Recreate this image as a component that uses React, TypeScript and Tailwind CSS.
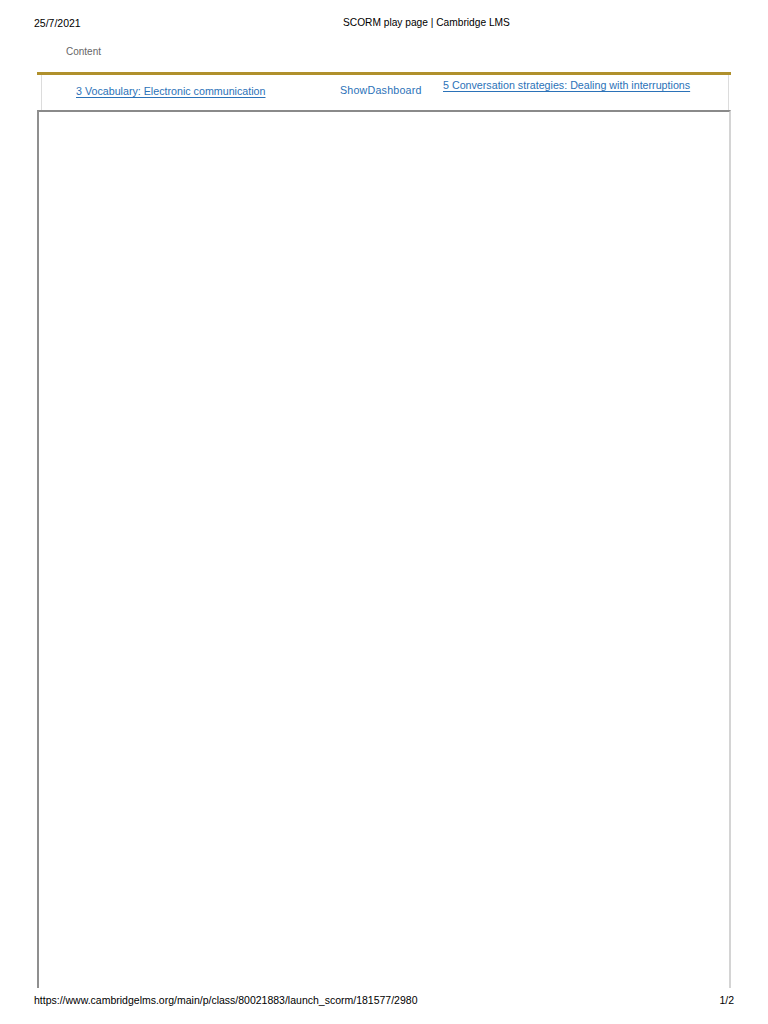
import React from "react";

export default function App() {
  return (
    <div
      className="w-[768px] h-[1024px] bg-white relative overflow-hidden text-[#222]"
      style={{ fontFamily: '"Liberation Sans", Arial, sans-serif' }}
    >
      {/* header */}
      <div className="flex items-center pl-[34px] pt-[17px] h-[29px] text-[10.5px] leading-[12px] text-black">
        <span className="w-[309px]">25/7/2021</span>
        <span className="text-[10.2px]">SCORM play page | Cambridge LMS</span>
      </div>
      <div className="pl-[66px] pt-[17px] text-[10px] leading-[12px] text-[#666]">Content</div>

      {/* content block */}
      <div className="ml-[37px] w-[694px] mt-[14px]">
        <div className="h-[3px] bg-[#b0902c]" />
        <div className="ml-[4px] mr-[2px] h-[35px] border-l border-r border-[#dcdcdc] flex text-[10.7px] leading-[13px] text-[#2b72b8]">
          <a className="ml-[34px] mt-[10px] underline underline-offset-2 w-[264px]">
            3 Vocabulary: Electronic communication
          </a>
          <a className="mt-[9px] w-[103px] tracking-[0.2px]">ShowDashboard</a>
          <a className="mt-[4px] underline underline-offset-2">
            5 Conversation strategies: Dealing with interruptions
          </a>
        </div>
        <div className="h-[878px] border-t-2 border-t-[#8a8a8a] border-l-2 border-l-[#8f8f8f] border-r-2 border-r-[#d4d4d4]" />
      </div>

      {/* footer */}
      <div className="flex justify-between pl-[34px] pr-[34px] mt-[6px] text-[10.5px] leading-[12px] text-black">
        <span>https://www.cambridgelms.org/main/p/class/80021883/launch_scorm/181577/2980</span>
        <span>1/2</span>
      </div>
    </div>
  );
}
